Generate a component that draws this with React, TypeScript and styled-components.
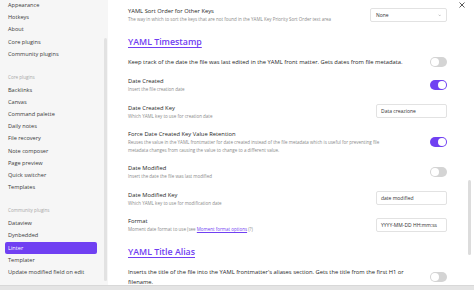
import React from "react";
import styled, { createGlobalStyle } from "styled-components";

const ACCENT = "#7040f2";

const GlobalStyle = createGlobalStyle`
  html, body {
    margin: 0;
    padding: 0;
    background: #ffffff;
  }
  body {
    font-family: "Open Sans", "Noto Sans", sans-serif;
  }
`;

const sidebarItems: { label: string; kind?: "header" | "active" }[] = [
  { label: "Appearance" },
  { label: "Hotkeys" },
  { label: "About" },
  { label: "Core plugins" },
  { label: "Community plugins" },
  { label: "Core plugins", kind: "header" },
  { label: "Backlinks" },
  { label: "Canvas" },
  { label: "Command palette" },
  { label: "Daily notes" },
  { label: "File recovery" },
  { label: "Note composer" },
  { label: "Page preview" },
  { label: "Quick switcher" },
  { label: "Templates" },
  { label: "Community plugins", kind: "header" },
  { label: "Dataview" },
  { label: "Dynbedded" },
  { label: "Linter", kind: "active" },
  { label: "Templater" },
  { label: "Update modified field on edit" },
];

const Toggle: React.FC<{ on?: boolean }> = ({ on }) => (
  <ToggleStyled $on={on}>
    <KnobStyled />
  </ToggleStyled>
);

const Setting: React.FC<{
  name: string;
  desc?: React.ReactNode;
  control?: React.ReactNode;
}> = ({ name, desc, control }) => (
  <SettingStyled>
    <InfoStyled>
      <NameStyled>{name}</NameStyled>
      {desc && <DescStyled>{desc}</DescStyled>}
    </InfoStyled>
    {control}
  </SettingStyled>
);

const App: React.FC = () => {
  return (
    <>
      <GlobalStyle />
      <FrameStyled>
        <ModalStyled>
          <SidebarStyled>
            <NavListStyled>
              {sidebarItems.map((item, i) =>
                item.kind === "header" ? (
                  <NavHeaderStyled key={i}>{item.label}</NavHeaderStyled>
                ) : (
                  <NavItemStyled key={i} $active={item.kind === "active"}>
                    {item.label}
                  </NavItemStyled>
                )
              )}
            </NavListStyled>
            <SideScrollStyled>
              <SideThumbStyled />
            </SideScrollStyled>
          </SidebarStyled>

          <MainStyled>
            <ContentStyled>
              <Setting
                name="YAML Sort Order for Other Keys"
                desc="The way in which to sort the keys that are not found in the YAML Key Priority Sort Order text area"
                control={
                  <DropdownStyled>
                    <span>None</span>
                    <CaretStyled viewBox="0 0 6 4">
                      <path d="M1 1 L3 3 L5 1" />
                    </CaretStyled>
                  </DropdownStyled>
                }
              />

              <HeadingStyled>YAML Timestamp</HeadingStyled>

              <SettingStyled>
                <TextStyled>
                  Keep track of the date the file was last edited in the YAML
                  front matter. Gets dates from file metadata.
                </TextStyled>
                <Toggle />
              </SettingStyled>

              <Setting
                name="Date Created"
                desc="Insert the file creation date"
                control={<Toggle on />}
              />
              <Setting
                name="Date Created Key"
                desc="Which YAML key to use for creation date"
                control={<InputStyled>Data creazione</InputStyled>}
              />
              <Setting
                name="Force Date Created Key Value Retention"
                desc={
                  <>
                    Reuses the value in the YAML frontmatter for date created
                    instead of the file metadata which is useful for preventing
                    file
                    <br />
                    metadata changes from causing the value to change to a
                    different value.
                  </>
                }
                control={<Toggle on />}
              />
              <Setting
                name="Date Modified"
                desc="Insert the date the file was last modified"
                control={<Toggle />}
              />
              <Setting
                name="Date Modified Key"
                desc="Which YAML key to use for modification date"
                control={<InputStyled>date modified</InputStyled>}
              />
              <Setting
                name="Format"
                desc={
                  <>
                    Moment date format to use (see{" "}
                    <LinkStyled>Moment format options</LinkStyled> (?)
                  </>
                }
                control={<InputStyled>YYYY-MM-DD HH:mm:ss</InputStyled>}
              />

              <HeadingStyled>YAML Title Alias</HeadingStyled>

              <SettingStyled>
                <TextStyled>
                  Inserts the title of the file into the YAML frontmatter's
                  aliases section. Gets the title from the first H1 or
                  <br />
                  filename.
                </TextStyled>
                <Toggle />
              </SettingStyled>
            </ContentStyled>
            <MainScrollStyled>
              <MainThumbStyled />
            </MainScrollStyled>
            <CloseStyled viewBox="0 0 6 6">
              <path d="M0.5 0.5 L5.5 5.5 M5.5 0.5 L0.5 5.5" />
            </CloseStyled>
          </MainStyled>
        </ModalStyled>
        <BackdropStripStyled />
      </FrameStyled>
    </>
  );
};

export default App;

const FrameStyled = styled.div({
  width: 474,
  height: 290,
  display: "flex",
  flexDirection: "column",
  overflow: "hidden",
});

const ModalStyled = styled.div({
  flex: 1,
  display: "flex",
  minHeight: 0,
  overflow: "hidden",
});

const BackdropStripStyled = styled.div({
  height: 4,
  backgroundColor: "#e4e4e4",
  borderTop: "1px solid #d8d8d8",
});

const SidebarStyled = styled.div({
  width: 108,
  flexShrink: 0,
  backgroundColor: "#f6f6f6",
  display: "flex",
});

const NavListStyled = styled.div({
  width: 92,
  padding: "0 6px 0 5px",
  marginTop: -1,
  display: "flex",
  flexDirection: "column",
});

const NavItemStyled = styled.div<{ $active?: boolean }>(({ $active }) => ({
  height: 12.2,
  lineHeight: "12.2px",
  fontSize: 5.6,
  paddingLeft: 3,
  borderRadius: 2,
  whiteSpace: "nowrap",
  color: $active ? "#ffffff" : "#3a3a3a",
  backgroundColor: $active ? ACCENT : "transparent",
}));

const NavHeaderStyled = styled.div({
  height: 23.8,
  display: "flex",
  alignItems: "flex-end",
  paddingLeft: 3,
  paddingBottom: 3,
  boxSizing: "border-box",
  fontSize: 4.6,
  lineHeight: "8px",
  color: "#a8a8a8",
});

const SideScrollStyled = styled.div({
  width: 5,
  display: "flex",
  flexDirection: "column",
});

const SideThumbStyled = styled.div({
  width: 3,
  margin: "38px 1px 4px 1px",
  flex: 1,
  borderRadius: 2,
  backgroundColor: "#e2e2e2",
});

const MainStyled = styled.div({
  flex: 1,
  display: "flex",
  position: "relative",
  backgroundColor: "#ffffff",
});

const ContentStyled = styled.div({
  flex: 1,
  padding: "1.5px 19px 0 20px",
  display: "flex",
  flexDirection: "column",
});

const MainScrollStyled = styled.div({
  width: 8,
  flexShrink: 0,
});

const MainThumbStyled = styled.div({
  width: 3,
  height: 75,
  marginTop: 180,
  marginLeft: 2,
  borderRadius: 2,
  backgroundColor: "#dcdcdc",
});

const CloseStyled = styled.svg({
  position: "absolute",
  top: 2,
  right: 9,
  width: 6,
  height: 6,
  fill: "none",
  stroke: "#5a5a5a",
  strokeWidth: 1,
});

const SettingStyled = styled.div({
  display: "flex",
  alignItems: "center",
  justifyContent: "space-between",
  gap: 10,
  padding: "4.5px 0",
});

const InfoStyled = styled.div({
  display: "flex",
  flexDirection: "column",
});

const NameStyled = styled.div({
  fontSize: 5.8,
  lineHeight: "10px",
  color: "#262626",
  whiteSpace: "nowrap",
});

const DescStyled = styled.div({
  fontSize: 4.5,
  lineHeight: "7.5px",
  color: "#8a8a8a",
  whiteSpace: "nowrap",
});

const TextStyled = styled.div({
  fontSize: 5.8,
  lineHeight: "10px",
  color: "#262626",
  whiteSpace: "nowrap",
});

const HeadingStyled = styled.div({
  fontSize: 8.8,
  fontWeight: 600,
  lineHeight: "14px",
  margin: "7px 0 3.5px",
  color: ACCENT,
  textDecoration: "underline",
  textUnderlineOffset: 1.5,
});

const LinkStyled = styled.span({
  color: ACCENT,
  textDecoration: "underline",
});

const DropdownStyled = styled.div({
  width: 77,
  height: 14,
  boxSizing: "border-box",
  flexShrink: 0,
  display: "flex",
  alignItems: "center",
  justifyContent: "space-between",
  padding: "0 5px",
  border: "1px solid #e2e2e2",
  borderRadius: 2,
  fontSize: 5,
  color: "#333333",
});

const CaretStyled = styled.svg({
  width: 3.5,
  height: 2.5,
  fill: "none",
  stroke: "#888888",
  strokeWidth: 0.8,
});

const InputStyled = styled.div({
  width: 71,
  height: 14,
  boxSizing: "border-box",
  flexShrink: 0,
  display: "flex",
  alignItems: "center",
  padding: "0 4px",
  border: "1px solid #e2e2e2",
  borderRadius: 2,
  fontSize: 5,
  color: "#333333",
  whiteSpace: "nowrap",
});

const ToggleStyled = styled.div<{ $on?: boolean }>(({ $on }) => ({
  width: 17,
  height: 10,
  flexShrink: 0,
  borderRadius: 5,
  boxSizing: "border-box",
  padding: 1,
  display: "flex",
  justifyContent: $on ? "flex-end" : "flex-start",
  backgroundColor: $on ? ACCENT : "#d4d4d4",
}));

const KnobStyled = styled.div({
  width: 8,
  height: 8,
  borderRadius: "50%",
  backgroundColor: "#ffffff",
});
